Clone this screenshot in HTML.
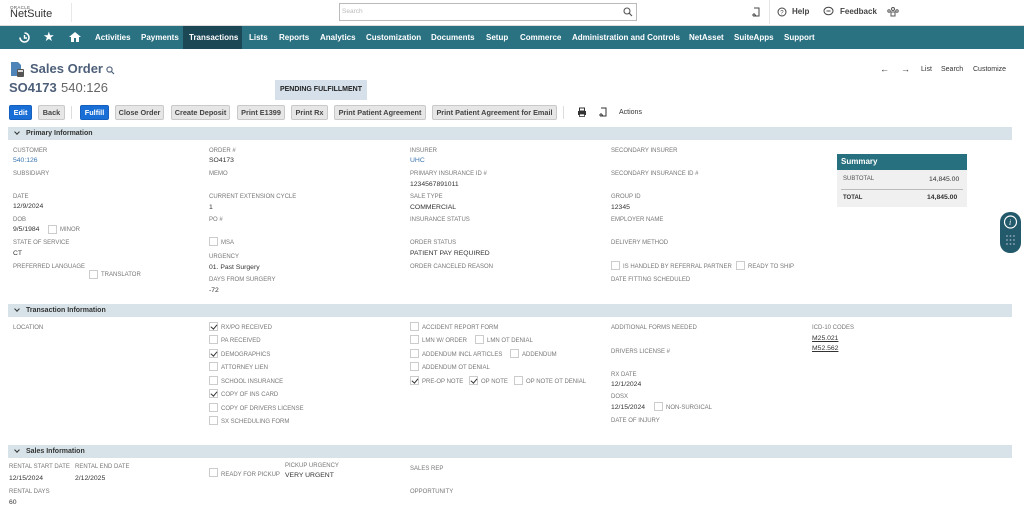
<!DOCTYPE html>
<html><head><meta charset="utf-8"><style>
*{margin:0;padding:0;box-sizing:border-box}
body{width:1024px;height:506px;overflow:hidden;background:#fff;font-family:"Liberation Sans",sans-serif;position:relative;color:#333}
.a{position:absolute;white-space:nowrap}
.nav{position:absolute;left:0;top:26px;width:1024px;height:23px;background:#2a7182}
.nv{position:absolute;top:33px;color:#fff;font-weight:bold;font-size:8px}
.btn{position:absolute;top:105px;height:15px;background:#e6e6e6;border:1px solid #c9c9c9;border-radius:2px;font-size:7.3px;font-weight:bold;color:#444;line-height:13px;text-align:center}
.btn.b{background:#1a6fd6;border-color:#1560be;color:#fff}
.bar{position:absolute;left:8px;width:1004px;height:13px;background:#d7e3e8;font-size:7px;font-weight:bold;color:#333;line-height:13px;padding-left:18px}
.bar:before{content:"";position:absolute;left:7px;top:3px;width:3px;height:3px;border-right:1.3px solid #333;border-bottom:1.3px solid #333;transform:rotate(45deg)}
.l{position:absolute;font-size:6px;color:#777;white-space:nowrap}
.v{position:absolute;font-size:6.8px;color:#333;white-space:nowrap}
.lk{color:#3a77b0}
.cb{position:absolute;width:9px;height:9px;border:1px solid #ccc;background:#fff}
.cb.c:after{content:"";position:absolute;left:2px;top:0px;width:2.5px;height:5px;border-right:1.4px solid #333;border-bottom:1.4px solid #333;transform:rotate(40deg)}
</style></head><body>
<div class="a" style="left:10px;top:5px;font-size:4.5px;color:#555;letter-spacing:.3px">ORACLE</div>
<div class="a" style="left:10px;top:8px;font-size:11px;color:#333">NetSuite</div>
<div class="a" style="left:71px;top:3px;width:1px;height:19px;background:#e8e8e8"></div>
<div class="a" style="left:339px;top:3px;width:298px;height:18px;border:1px solid #bbb"></div>
<div class="a" style="left:342px;top:8px;font-size:6.5px;color:#bbb">Search</div>
<svg class="a" style="left:623px;top:7px" width="10" height="10"><circle cx="4" cy="4" r="3" fill="none" stroke="#555" stroke-width="1.1"/><path d="M6.2 6.2L9 9" stroke="#555" stroke-width="1.2"/></svg>
<svg class="a" style="left:751px;top:6px" width="10" height="12"><path d="M3 2H8V10H4M1 9H5M3 7V11" fill="none" stroke="#444" stroke-width="1"/></svg>
<div class="a" style="left:769px;top:0;width:1px;height:24px;background:#e5e5e5"></div>
<svg class="a" style="left:777px;top:7px" width="10" height="10"><circle cx="5" cy="5" r="4" fill="none" stroke="#444"/><text x="3.3" y="7.3" font-size="6" fill="#444" font-family="Liberation Sans">?</text></svg>
<div class="a" style="left:792px;top:7px;font-size:8px;font-weight:bold;color:#444">Help</div>
<svg class="a" style="left:823px;top:6px" width="11" height="11"><ellipse cx="5.5" cy="5" rx="4.5" ry="3.8" fill="none" stroke="#444"/><path d="M3.5 5H7.5" stroke="#444"/></svg>
<div class="a" style="left:840px;top:7px;font-size:8px;font-weight:bold;color:#444">Feedback</div>
<svg class="a" style="left:887px;top:6px" width="12" height="12"><circle cx="6" cy="3" r="1.5" fill="none" stroke="#555"/><circle cx="2" cy="5" r="1.2" fill="none" stroke="#555"/><circle cx="10" cy="5" r="1.2" fill="none" stroke="#555"/><rect x="4" y="6" width="4" height="4" fill="none" stroke="#555"/></svg>
<div class="a" style="left:0;top:25px;width:1024px;height:1px;background:#ddd"></div>
<div class="nav"></div>
<div class="a" style="left:183px;top:26px;width:59px;height:23px;background:#1c4755"></div>
<svg class="a" style="left:18px;top:31px" width="13" height="13"><path d="M6.5 2A4.5 4.5 0 1 1 2 6.5" fill="none" stroke="#fff" stroke-width="1.6"/><path d="M6.5 4V7H9" fill="none" stroke="#fff" stroke-width="1.4"/></svg>
<div class="a" style="left:43px;top:29px;font-size:13px;color:#fff">★</div>
<svg class="a" style="left:68px;top:31px" width="14" height="12"><path d="M7 1L1 6H3V11H11V6H13Z" fill="#fff"/><rect x="6" y="7" width="2" height="4" fill="#2a7182"/></svg>
<div class="nv" style="left:95px">Activities</div>
<div class="nv" style="left:141px">Payments</div>
<div class="nv" style="left:189px">Transactions</div>
<div class="nv" style="left:249px">Lists</div>
<div class="nv" style="left:279px">Reports</div>
<div class="nv" style="left:320px">Analytics</div>
<div class="nv" style="left:366px">Customization</div>
<div class="nv" style="left:431px">Documents</div>
<div class="nv" style="left:486px">Setup</div>
<div class="nv" style="left:520px">Commerce</div>
<div class="nv" style="left:572px">Administration and Controls</div>
<div class="nv" style="left:689px">NetAsset</div>
<div class="nv" style="left:734px">SuiteApps</div>
<div class="nv" style="left:784px">Support</div>

<svg class="a" style="left:10px;top:61px" width="15" height="17"><path d="M1 1H8L11 4V15H1Z" fill="#4f84b8"/><rect x="7" y="8" width="7" height="8" rx="1" fill="#555"/><rect x="8" y="9" width="5" height="2" fill="#ddd"/></svg>
<div class="a" style="left:30px;top:61px;font-size:13px;font-weight:bold;color:#4d5f79">Sales Order</div>
<svg class="a" style="left:106px;top:66px" width="9" height="9"><circle cx="3.5" cy="3.5" r="2.6" fill="none" stroke="#4d5f79" stroke-width="1.1"/><path d="M5.5 5.5L8 8" stroke="#4d5f79" stroke-width="1.2"/></svg>
<div class="a" style="left:9px;top:80px;font-size:13px;font-weight:bold;color:#4d5f79">SO4173</div>
<div class="a" style="left:61px;top:80px;font-size:13px;color:#666">540:126</div>
<div class="a" style="left:275px;top:80px;width:92px;height:20px;background:#d6e0ea;font-size:7px;font-weight:bold;color:#222;text-align:center;line-height:20px">PENDING FULFILLMENT</div>
<div class="a" style="left:880px;top:64px;font-size:9px;color:#333">←</div>
<div class="a" style="left:901px;top:64px;font-size:9px;color:#333">→</div>
<div class="a" style="left:921px;top:66px;font-size:7px;color:#333">List</div>
<div class="a" style="left:941px;top:66px;font-size:7px;color:#333">Search</div>
<div class="a" style="left:973px;top:66px;font-size:7px;color:#333">Customize</div>

<div class="btn b" style="left:9px;width:23px">Edit</div>
<div class="btn" style="left:38px;width:27px">Back</div>
<div class="a" style="left:71px;top:106px;width:1px;height:13px;background:#ddd"></div>
<div class="btn b" style="left:80px;width:29px">Fulfill</div>
<div class="btn" style="left:115px;width:49px">Close Order</div>
<div class="btn" style="left:171px;width:59px">Create Deposit</div>
<div class="btn" style="left:237px;width:48px">Print E1399</div>
<div class="btn" style="left:291px;width:37px">Print Rx</div>
<div class="btn" style="left:334px;width:92px">Print Patient Agreement</div>
<div class="btn" style="left:432px;width:125px">Print Patient Agreement for Email</div>
<div class="a" style="left:563px;top:106px;width:1px;height:13px;background:#ddd"></div>
<svg class="a" style="left:577px;top:107px" width="10" height="10"><rect x="2.5" y="1" width="5" height="3" fill="none" stroke="#333"/><rect x="1" y="4" width="8" height="4" fill="#333"/><rect x="2.5" y="7" width="5" height="2.5" fill="#fff" stroke="#333" stroke-width=".8"/></svg>
<svg class="a" style="left:598px;top:106px" width="10" height="12"><path d="M3 2H8V10H4M1 9H5M3 7V11" fill="none" stroke="#333" stroke-width="1"/></svg>
<div class="a" style="left:619px;top:109px;font-size:7px;color:#333">Actions</div>

<div class="bar" style="top:127px">Primary Information</div>
<div class="l" style="left:13px;top:148px">CUSTOMER</div><div class="v lk" style="left:13px;top:157px">540:126</div>
<div class="l" style="left:13px;top:171px">SUBSIDIARY</div>
<div class="l" style="left:13px;top:194px">DATE</div><div class="v" style="left:13px;top:203px">12/9/2024</div>
<div class="l" style="left:13px;top:217px">DOB</div><div class="v" style="left:13px;top:226px">9/5/1984</div>
<div class="cb" style="left:48px;top:225px"></div><div class="l" style="left:60px;top:227px">MINOR</div>
<div class="l" style="left:13px;top:240px">STATE OF SERVICE</div><div class="v" style="left:13px;top:250px">CT</div>
<div class="l" style="left:13px;top:264px">PREFERRED LANGUAGE</div>
<div class="cb" style="left:89px;top:270px"></div><div class="l" style="left:101px;top:272px">TRANSLATOR</div>

<div class="l" style="left:209px;top:148px">ORDER #</div><div class="v" style="left:209px;top:157px">SO4173</div>
<div class="l" style="left:209px;top:171px">MEMO</div>
<div class="l" style="left:209px;top:194px">CURRENT EXTENSION CYCLE</div><div class="v" style="left:209px;top:204px">1</div>
<div class="l" style="left:209px;top:217px">PO #</div>
<div class="cb" style="left:209px;top:237px"></div><div class="l" style="left:221px;top:240px">MSA</div>
<div class="l" style="left:209px;top:254px">URGENCY</div><div class="v" style="left:209px;top:264px">01. Past Surgery</div>
<div class="l" style="left:209px;top:277px">DAYS FROM SURGERY</div><div class="v" style="left:209px;top:287px">-72</div>

<div class="l" style="left:410px;top:148px">INSURER</div><div class="v lk" style="left:410px;top:157px">UHC</div>
<div class="l" style="left:410px;top:171px">PRIMARY INSURANCE ID #</div><div class="v" style="left:410px;top:181px">1234567891011</div>
<div class="l" style="left:410px;top:194px">SALE TYPE</div><div class="v" style="left:410px;top:204px">COMMERCIAL</div>
<div class="l" style="left:410px;top:217px">INSURANCE STATUS</div>
<div class="l" style="left:410px;top:240px">ORDER STATUS</div><div class="v" style="left:410px;top:250px">PATIENT PAY REQUIRED</div>
<div class="l" style="left:410px;top:264px">ORDER CANCELED REASON</div>

<div class="l" style="left:611px;top:148px">SECONDARY INSURER</div>
<div class="l" style="left:611px;top:171px">SECONDARY INSURANCE ID #</div>
<div class="l" style="left:611px;top:194px">GROUP ID</div><div class="v" style="left:611px;top:204px">12345</div>
<div class="l" style="left:611px;top:217px">EMPLOYER NAME</div>
<div class="l" style="left:611px;top:240px">DELIVERY METHOD</div>
<div class="cb" style="left:611px;top:261px"></div><div class="l" style="left:623px;top:264px">IS HANDLED BY REFERRAL PARTNER</div>
<div class="cb" style="left:736px;top:261px"></div><div class="l" style="left:748px;top:264px">READY TO SHIP</div>
<div class="l" style="left:611px;top:277px">DATE FITTING SCHEDULED</div>

<div class="a" style="left:837px;top:154px;width:130px;height:53px;background:#f0f0f0"></div>
<div class="a" style="left:837px;top:154px;width:130px;height:16px;background:#27707f;color:#fff;font-size:8px;font-weight:bold;line-height:16px;padding-left:4px">Summary</div>
<div class="l" style="left:843px;top:176px;color:#555">SUBTOTAL</div><div class="v" style="left:929px;top:176px">14,845.00</div>
<div class="a" style="left:841px;top:189px;width:122px;height:1px;background:#bbb"></div>
<div class="l" style="left:843px;top:195px;color:#333;font-weight:bold">TOTAL</div><div class="v" style="left:927px;top:194px;font-weight:bold">14,845.00</div>
<div class="a" style="left:1000px;top:212px;width:21px;height:41px;border-radius:10px;background:#22596b"></div>
<svg class="a" style="left:1000px;top:212px" width="21" height="41"><circle cx="10.5" cy="10" r="6" fill="none" stroke="#fff" stroke-width="1.2"/><text x="9" y="13" font-size="8" font-style="italic" fill="#fff" font-family="Liberation Serif">i</text><g fill="#9ab"><circle cx="7" cy="24" r=".9"/><circle cx="10.5" cy="24" r=".9"/><circle cx="14" cy="24" r=".9"/><circle cx="7" cy="28" r=".9"/><circle cx="10.5" cy="28" r=".9"/><circle cx="14" cy="28" r=".9"/><circle cx="7" cy="32" r=".9"/><circle cx="10.5" cy="32" r=".9"/><circle cx="14" cy="32" r=".9"/></g></svg>

<div class="bar" style="top:304px">Transaction Information</div>
<div class="l" style="left:13px;top:325px">LOCATION</div>
<div class="cb c" style="left:209px;top:322px"></div><div class="l" style="left:221px;top:325px">RX/PO RECEIVED</div>
<div class="cb" style="left:209px;top:335px"></div><div class="l" style="left:221px;top:338px">PA RECEIVED</div>
<div class="cb c" style="left:209px;top:349px"></div><div class="l" style="left:221px;top:352px">DEMOGRAPHICS</div>
<div class="cb" style="left:209px;top:362px"></div><div class="l" style="left:221px;top:365px">ATTORNEY LIEN</div>
<div class="cb" style="left:209px;top:376px"></div><div class="l" style="left:221px;top:379px">SCHOOL INSURANCE</div>
<div class="cb c" style="left:209px;top:389px"></div><div class="l" style="left:221px;top:392px">COPY OF INS CARD</div>
<div class="cb" style="left:209px;top:403px"></div><div class="l" style="left:221px;top:406px">COPY OF DRIVERS LICENSE</div>
<div class="cb" style="left:209px;top:416px"></div><div class="l" style="left:221px;top:419px">SX SCHEDULING FORM</div>

<div class="cb" style="left:410px;top:322px"></div><div class="l" style="left:422px;top:325px">ACCIDENT REPORT FORM</div>
<div class="cb" style="left:410px;top:335px"></div><div class="l" style="left:422px;top:338px">LMN W/ ORDER</div>
<div class="cb" style="left:475px;top:335px"></div><div class="l" style="left:487px;top:338px">LMN OT DENIAL</div>
<div class="cb" style="left:410px;top:349px"></div><div class="l" style="left:422px;top:352px">ADDENDUM INCL ARTICLES</div>
<div class="cb" style="left:510px;top:349px"></div><div class="l" style="left:522px;top:352px">ADDENDUM</div>
<div class="cb" style="left:410px;top:362px"></div><div class="l" style="left:422px;top:365px">ADDENDUM OT DENIAL</div>
<div class="cb c" style="left:410px;top:376px"></div><div class="l" style="left:422px;top:379px">PRE-OP NOTE</div>
<div class="cb c" style="left:469px;top:376px"></div><div class="l" style="left:481px;top:379px">OP NOTE</div>
<div class="cb" style="left:514px;top:376px"></div><div class="l" style="left:526px;top:379px">OP NOTE OT DENIAL</div>

<div class="l" style="left:611px;top:325px">ADDITIONAL FORMS NEEDED</div>
<div class="l" style="left:611px;top:349px">DRIVERS LICENSE #</div>
<div class="l" style="left:611px;top:372px">RX DATE</div><div class="v" style="left:611px;top:381px">12/1/2024</div>
<div class="l" style="left:611px;top:394px">DOSX</div><div class="v" style="left:611px;top:404px">12/15/2024</div>
<div class="cb" style="left:654px;top:402px"></div><div class="l" style="left:666px;top:405px">NON-SURGICAL</div>
<div class="l" style="left:611px;top:418px">DATE OF INJURY</div>
<div class="l" style="left:812px;top:325px">ICD-10 CODES</div>
<div class="v" style="left:812px;top:335px;text-decoration:underline">M25.021</div>
<div class="v" style="left:812px;top:345px;text-decoration:underline">M52.562</div>

<div class="bar" style="top:445px">Sales Information</div>
<div class="l" style="left:9px;top:464px">RENTAL START DATE</div><div class="v" style="left:9px;top:475px">12/15/2024</div>
<div class="l" style="left:75px;top:464px">RENTAL END DATE</div><div class="v" style="left:75px;top:475px">2/12/2025</div>
<div class="cb" style="left:209px;top:468px"></div><div class="l" style="left:221px;top:472px">READY FOR PICKUP</div>
<div class="l" style="left:285px;top:463px">PICKUP URGENCY</div><div class="v" style="left:285px;top:472px">VERY URGENT</div>
<div class="l" style="left:410px;top:466px">SALES REP</div>
<div class="l" style="left:9px;top:489px">RENTAL DAYS</div><div class="v" style="left:9px;top:499px">60</div>
<div class="l" style="left:410px;top:489px">OPPORTUNITY</div>
</body></html>
